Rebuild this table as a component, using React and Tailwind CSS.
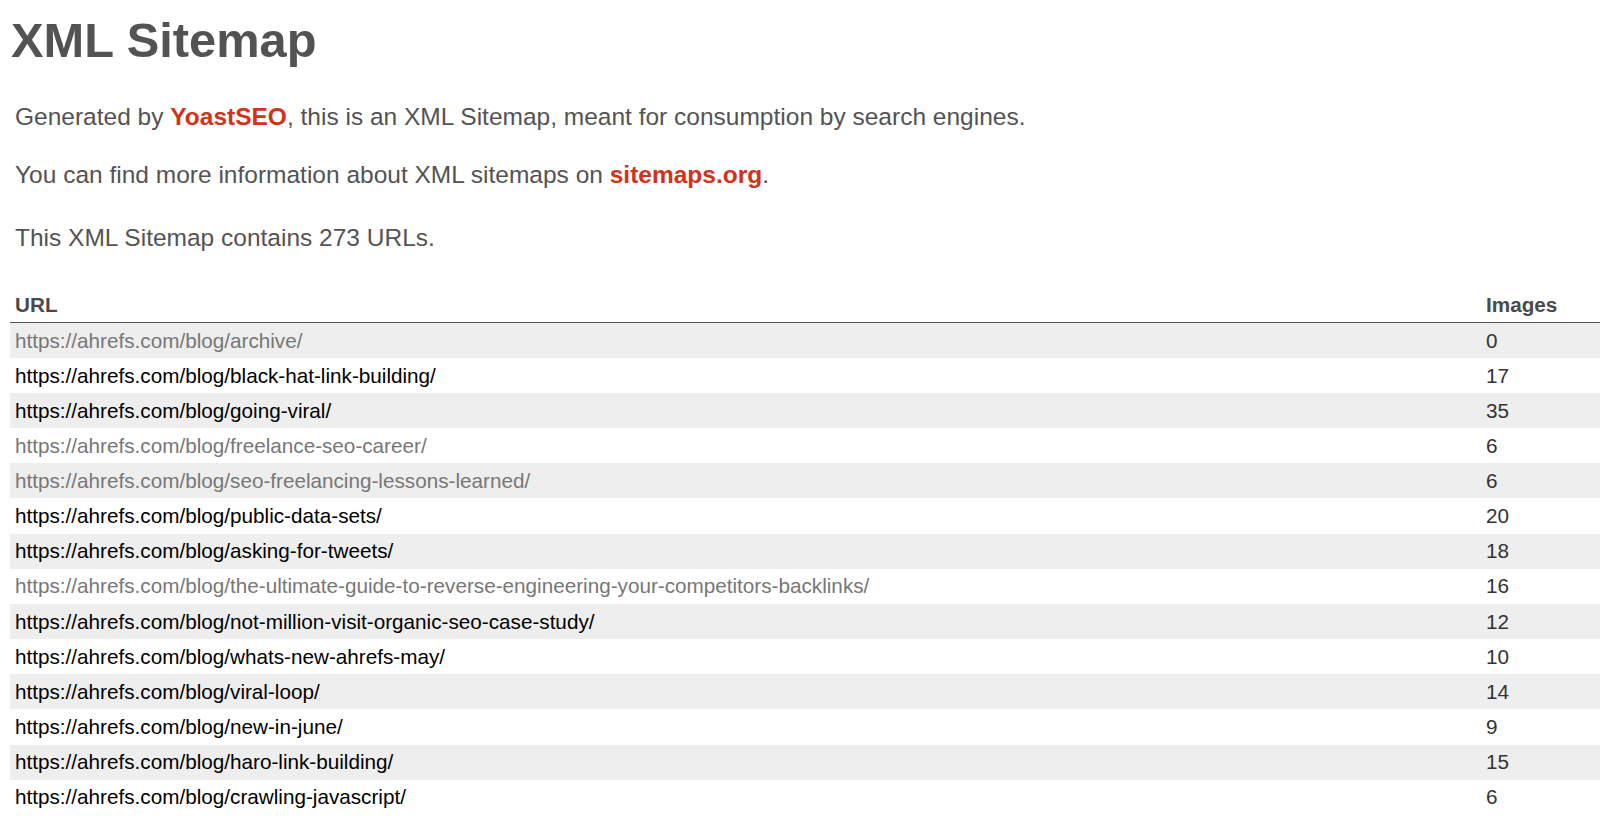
import React from 'react';

const URLS = [
  { path: 'archive/', images: 0, visited: true },
  { path: 'black-hat-link-building/', images: 17 },
  { path: 'going-viral/', images: 35 },
  { path: 'freelance-seo-career/', images: 6, visited: true },
  { path: 'seo-freelancing-lessons-learned/', images: 6, visited: true },
  { path: 'public-data-sets/', images: 20 },
  { path: 'asking-for-tweets/', images: 18 },
  { path: 'the-ultimate-guide-to-reverse-engineering-your-competitors-backlinks/', images: 16, visited: true },
  { path: 'not-million-visit-organic-seo-case-study/', images: 12 },
  { path: 'whats-new-ahrefs-may/', images: 10 },
  { path: 'viral-loop/', images: 14 },
  { path: 'new-in-june/', images: 9 },
  { path: 'haro-link-building/', images: 15 },
  { path: 'crawling-javascript/', images: 6 },
];

export default function App() {
  return (
    <div
      className="w-[1600px] h-[816px] overflow-hidden bg-white text-[#545353] pt-[12px] pl-[10px]"
      style={{ fontFamily: '"Liberation Sans", Arial, Helvetica, sans-serif' }}
    >
      <h1 className="ml-[1px] text-[48.8px] leading-[56px] font-bold text-[#545353]">XML Sitemap</h1>

      {/* explanation block */}
      <div className="ml-[5px] text-[24.5px] leading-[29.3px]">
        <p className="mt-[34.2px]">
          Generated by{' '}
          <a className="text-[#d3321a] font-bold">YoastSEO</a>, this is an XML Sitemap, meant for consumption by search engines.
        </p>
        <p className="mt-[28.3px]">
          You can find more information about XML sitemaps on{' '}
          <a className="text-[#d3321a] font-bold">sitemaps.org</a>.
        </p>
        <p className="mt-[33.8px]">This XML Sitemap contains 273 URLs.</p>
      </div>

      <table className="mt-[40.8px] w-[1590px] table-fixed border-collapse text-[20.7px] leading-[23.7px]">
        <colgroup>
          <col className="w-[1471px]" />
          <col className="w-[119px]" />
        </colgroup>
        <thead>
          <tr className="border-b border-[#555]">
            <th className="text-left font-bold pl-[5px] pb-[5.5px] text-[#4a4a4a]">URL</th>
            <th className="text-left font-bold pl-[5px] pb-[5.5px] text-[#4a4a4a]">Images</th>
          </tr>
        </thead>
        <tbody>
          {URLS.map((u, i) => (
            <tr key={u.path} className={i % 2 === 0 ? 'bg-[#eeeeee]' : 'bg-white'}>
              <td className={`h-[35.16px] p-0 pl-[5px] align-middle whitespace-nowrap ${u.visited ? 'text-[#777777]' : 'text-black'}`}>
                <a>https://ahrefs.com/blog/{u.path}</a>
              </td>
              <td className="h-[35.16px] p-0 pl-[5px] align-middle text-[#333]">{u.images}</td>
            </tr>
          ))}
        </tbody>
      </table>
    </div>
  );
}
